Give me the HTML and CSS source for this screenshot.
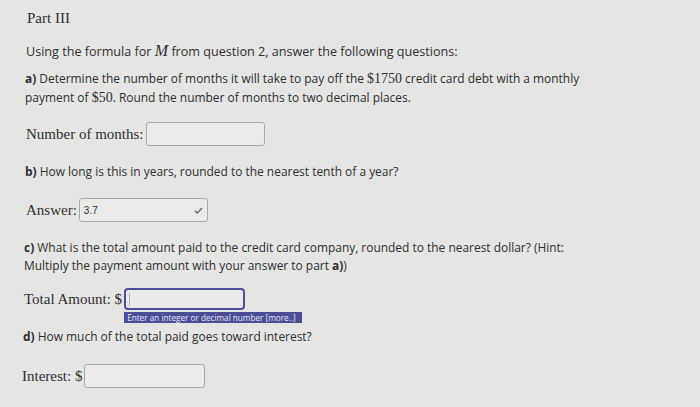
FILE: index.html
```html
<!DOCTYPE html>
<html>
<head>
<meta charset="utf-8">
<link rel="stylesheet" href="styles.css">
</head>
<body>
<div class="page">
  <div class="part">Part III</div>
  <p class="intro">Using the formula for <span class="math-i">M</span> from question 2, answer the following questions:</p>
  <p class="q qa"><b>a)</b> Determine the number of months it will take to pay off the <span class="math">$1750</span> credit card debt with a monthly<br>payment of <span class="math">$50</span>. Round the number of months to two decimal places.</p>
  <div class="row row-months"><span class="label">Number of months:</span><span class="box box-months"></span></div>
  <p class="q qb"><b>b)</b> How long is this in years, rounded to the nearest tenth of a year?</p>
  <div class="row row-answer"><span class="label">Answer:</span><span class="box box-answer"><span class="val">3.7</span><svg class="check" width="9" height="7" viewBox="0 0 9 7"><path d="M1 3.8 L3.4 6 L8 1" fill="none" stroke="#666" stroke-width="1.4"/></svg></span></div>
  <p class="q qc"><b>c)</b> What is the total amount paid to the credit card company, rounded to the nearest dollar? (Hint:<br>Multiply the payment amount with your answer to part <b>a)</b>)</p>
  <div class="row row-total"><span class="label">Total Amount: $</span><span class="field"><span class="box box-total"><span class="caret"></span></span><span class="tip">Enter an integer or decimal number [more..]</span></span></div>
  <p class="q qd"><b>d)</b> How much of the total paid goes toward interest?</p>
  <div class="row row-interest"><span class="label">Interest: $</span><span class="box box-interest"></span></div>
</div>
</body>
</html>
```
FILE: styles.css
```css
html, body {
  margin: 0;
  padding: 0;
}
body {
  background: #e5e5e4;
  width: 700px;
  height: 407px;
  overflow: hidden;
  color: #2f2f2f;
  font-family: "Open Sans", "Liberation Sans", sans-serif;
  font-size: 12.6px;
}
.page {
  padding: 9px 0 0 26px;
}
.part {
  font-family: "Liberation Serif", serif;
  font-size: 15px;
  line-height: 18px;
  margin-left: 1px;
}
p {
  margin: 0;
  line-height: 19px;
  white-space: nowrap;
}
.intro {
  margin-top: 15px;
}
.q {
  font-size: 11.95px;
}
.math-i {
  font-family: "Liberation Serif", serif;
  font-style: italic;
  font-size: 16px;
  line-height: 1;
}
.math {
  font-family: "Liberation Serif", serif;
  font-size: 14px;
  line-height: 1;
}
.q b {
  font-weight: 700;
}
.qa {
  margin-top: 8px;
  margin-left: -1px;
}
.row {
  display: flex;
  align-items: center;
  height: 24px;
}
.label {
  font-family: "Liberation Serif", serif;
  font-size: 15px;
  margin-right: 2px;
}
.box {
  display: flex;
  align-items: center;
  box-sizing: border-box;
  height: 24px;
  border: 1px solid #a9a9a9;
  border-radius: 3px;
  background: #ebebea;
}
.row-months {
  margin-top: 15px;
}
.box-months {
  width: 119px;
}
.qb {
  margin-top: 16px;
  margin-left: -1px;
}
.row-answer {
  margin-top: 17px;
}
.box-answer {
  width: 129px;
  justify-content: space-between;
  padding: 0 4px;
}
.val {
  font-family: "Liberation Sans", sans-serif;
  font-size: 10px;
}
.check {
  display: block;
}
.qc {
  margin-top: 17px;
  margin-left: -2px;
  line-height: 18px;
}
.row-total {
  margin-top: 13px;
  margin-left: -2px;
  height: 22px;
}
.field {
  position: relative;
  display: flex;
}
.box-total {
  width: 121px;
  height: 22px;
  border: 2px solid #4d4f97;
  border-radius: 4px;
  background: #eaeaea;
  padding-left: 3px;
}
.caret {
  width: 1px;
  height: 13px;
  background: #b0b0b0;
}
.tip {
  position: absolute;
  left: 0;
  top: 24px;
  width: 178px;
  height: 11px;
  line-height: 11px;
  background: #4a4e97;
  color: #e8e8f2;
  font-size: 8.2px;
  padding-left: 3px;
  box-sizing: border-box;
  white-space: nowrap;
}
.qd {
  margin-top: 17px;
  margin-left: -3px;
}
.row-interest {
  margin-top: 18px;
  margin-left: -4px;
}
.box-interest {
  width: 121px;
}
```
